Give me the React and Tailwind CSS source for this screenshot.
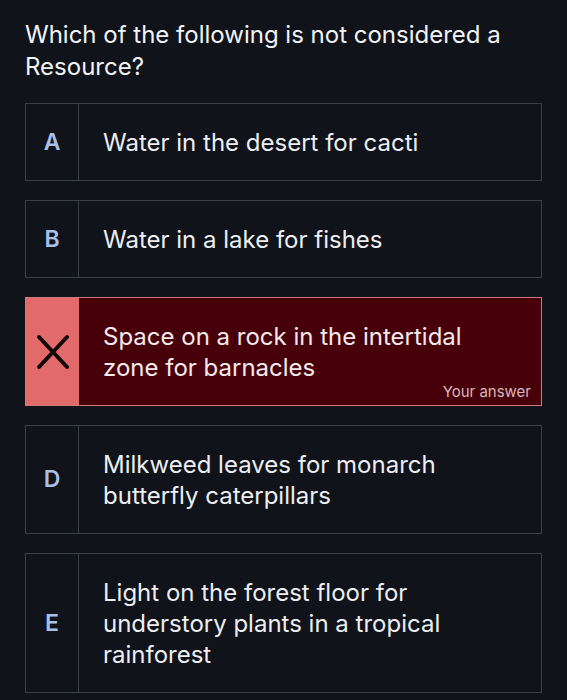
import React from 'react';

const options = [
  { key: 'A', text: 'Water in the desert for cacti' },
  { key: 'B', text: 'Water in a lake for fishes' },
  { key: 'C', text: 'Space on a rock in the intertidal zone for barnacles', wrong: true },
  { key: 'D', text: 'Milkweed leaves for monarch butterfly caterpillars' },
  { key: 'E', text: 'Light on the forest floor for understory plants in a tropical rainforest' },
];

function XMark() {
  return (
    <svg width="32" height="36" viewBox="0 0 32 36" fill="none">
      <path d="M2 3 L30 33 M30 3 L2 33" stroke="#140707" strokeWidth="4" strokeLinecap="round" />
    </svg>
  );
}

function Option({ opt }) {
  if (opt.wrong) {
    return (
      <div className="flex border border-[#c97a7a] bg-[#47000a]">
        <div className="w-[53px] shrink-0 bg-[#e36a6a] flex items-center justify-center">
          <XMark />
        </div>
        <div className="flex-1 pt-[23px] pb-[4px] pl-[24px] pr-[10px]">
          <p className="text-[24px] leading-[31px] text-[#f4eaea] pr-[14px]">{opt.text}</p>
          <p className="text-right text-[15px] leading-[18px] text-[#d9b8b8]">Your answer</p>
        </div>
      </div>
    );
  }
  return (
    <div className="flex border border-[#3b3f48]">
      <div className="w-[53px] shrink-0 border-r border-[#3b3f48] flex items-center justify-center">
        <span className="text-[23px] font-semibold text-[#a8bfe6]">{opt.key}</span>
      </div>
      <div className="flex-1 pt-[23px] pb-[22px] pl-[24px] pr-[24px]">
        <p className="text-[24px] leading-[31px] text-[#eceef2]">{opt.text}</p>
      </div>
    </div>
  );
}

export default function App() {
  return (
    <div className="min-h-[700px] bg-[#10131a] px-[25px] pt-[19px] pb-4" style={{ fontFamily: 'Inter, "Noto Sans", sans-serif' }}>
      <h1 className="text-[24px] leading-[32px] text-[#f2f3f5] mb-[20px]">
        Which of the following is not considered a Resource?
      </h1>
      <div className="flex flex-col gap-[19px]">
        {options.map((opt) => (
          <Option key={opt.key} opt={opt} />
        ))}
      </div>
    </div>
  );
}
